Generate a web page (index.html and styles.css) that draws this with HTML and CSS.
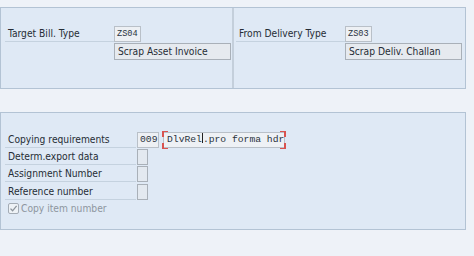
FILE: index.html
```html
<!DOCTYPE html>
<html>
<head>
<meta charset="utf-8">
<link rel="stylesheet" href="styles.css">
</head>
<body>
<div class="screen">
  <div class="panel top">
    <div class="group">
      <div class="row">
        <span class="label w-a">Target Bill. Type</span>
        <span class="field code small">ZS04</span>
      </div>
      <div class="row desc-row">
        <span class="desc">Scrap Asset Invoice</span>
      </div>
    </div>
    <div class="group right">
      <div class="row">
        <span class="label w-a">From Delivery Type</span>
        <span class="field code small">ZS03</span>
      </div>
      <div class="row desc-row">
        <span class="desc">Scrap Deliv. Challan</span>
      </div>
    </div>
  </div>
  <div class="panel bottom">
    <div class="frow">
      <span class="label w-b">Copying requirements</span>
      <span class="field code num">009</span>
      <span class="field code long">DlvRel<i class="caret"></i>.pro forma hdr<i class="br tl"></i><i class="br tr"></i><i class="br bl"></i><i class="br brr"></i></span>
    </div>
    <div class="frow">
      <span class="label w-b">Determ.export data</span>
      <span class="box"></span>
    </div>
    <div class="frow">
      <span class="label w-b">Assignment Number</span>
      <span class="box"></span>
    </div>
    <div class="frow">
      <span class="label w-b">Reference number</span>
      <span class="box"></span>
    </div>
    <div class="frow chk">
      <span class="check"><svg width="11" height="11" viewBox="0 0 11 11"><rect x="0.5" y="0.5" width="10" height="10" rx="1.5" fill="#eef2f6" stroke="#a4acb5"/><path d="M2.5 5.6 L4.6 7.8 L8.6 2.8" fill="none" stroke="#8d949c" stroke-width="1.3"/></svg></span>
      <span class="disabled">Copy item number</span>
    </div>
  </div>
</div>
</body>
</html>
```
FILE: styles.css
```css
html, body {
  margin: 0;
  padding: 0;
  background: #eef2f8;
}
.screen {
  width: 474px;
  height: 256px;
  padding-top: 7px;
  box-sizing: border-box;
  font-family: "DejaVu Sans Condensed", "DejaVu Sans", sans-serif;
  font-stretch: condensed;
  font-size: 10.2px;
  color: #262d36;
}
.panel {
  background: #dfe9f5;
  border: 1px solid #b3c3d4;
  width: 466px;
  box-sizing: border-box;
}
.panel.top {
  height: 82px;
  display: grid;
  grid-template-columns: 231px 1fr;
}
.group {
  padding-top: 17px;
  padding-left: 4px;
}
.group.right {
  border-left: 2px solid #c4cfdb;
  padding-left: 2px;
}
.row {
  display: flex;
  align-items: center;
  height: 17px;
}
.desc-row {
  padding-left: 109px;
  margin-top: 1px;
}
.label {
  display: block;
  height: 16px;
  line-height: 16px;
  padding-left: 3px;
  border-bottom: 1px solid #c5d2df;
  box-sizing: border-box;
  white-space: nowrap;
}
.w-a { width: 109px; }
.w-b { width: 131px; }
.field {
  display: inline-block;
  height: 16px;
  line-height: 14px;
  border: 1px solid #b9c0c8;
  background: #edf0f4;
  box-sizing: border-box;
  padding: 0 3px;
}
.code {
  font-family: "Liberation Mono", "DejaVu Sans Mono", monospace;
  font-stretch: normal;
  font-size: 9.7px;
  color: #2a3340;
}
.code.small {
  font-size: 8.6px;
  width: 27px;
  padding: 0 2px;
}
.desc {
  display: inline-block;
  width: 117px;
  height: 17px;
  line-height: 15px;
  border: 1px solid #a9b0b8;
  background: #e6eaef;
  box-sizing: border-box;
  padding-left: 3px;
  white-space: nowrap;
  overflow: hidden;
}
.panel.bottom {
  margin-top: 23px;
  height: 118px;
  padding-top: 18px;
  padding-left: 4px;
}
.frow {
  display: flex;
  align-items: center;
  height: 17.3px;
}
.num {
  margin-left: 1px;
  width: 22px;
  padding: 0 2px;
}
.long {
  position: relative;
  margin-left: 4px;
  width: 122px;
  padding-left: 3px;
  background: #eef1f5;
  white-space: nowrap;
}
.caret {
  display: inline-block;
  width: 1px;
  height: 10px;
  background: #222;
  vertical-align: -1px;
}
.br {
  position: absolute;
  width: 4px;
  height: 5px;
  border-color: #d9534f;
  border-style: solid;
  border-width: 0;
}
.tl { left: -2px; top: -2px; border-left-width: 2px; border-top-width: 1px; }
.tr { right: -2px; top: -2px; border-right-width: 2px; border-top-width: 1px; }
.bl { left: -2px; bottom: -2px; border-left-width: 2px; border-bottom-width: 1px; }
.brr { right: -2px; bottom: -2px; border-right-width: 2px; border-bottom-width: 1px; }
.box {
  display: inline-block;
  margin-left: 1px;
  width: 11px;
  height: 16px;
  border: 1px solid #a9b0b8;
  background: #e3e9f0;
  box-sizing: border-box;
}
.chk {
  padding-left: 3px;
  color: #8e969f;
}
.check {
  display: inline-flex;
  width: 12px;
}
.disabled {
  margin-left: 1px;
}
```
